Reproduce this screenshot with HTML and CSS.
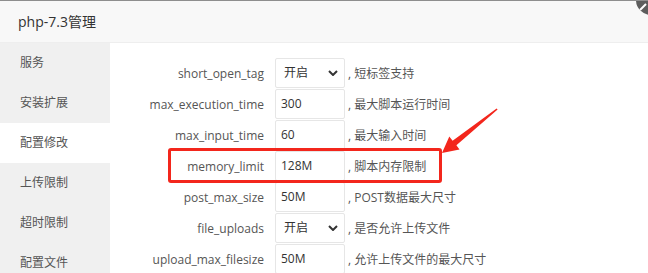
FILE: index.html
```html
<!DOCTYPE html>
<html lang="zh">
<head>
<meta charset="utf-8">
<title>php-7.3管理</title>
<link rel="stylesheet" href="styles.css">
</head>
<body>
<div class="dialog">
  <div class="title">php-7.3管理</div>
  <div class="main">
    <ul class="side">
      <li>服务</li>
      <li>安装扩展</li>
      <li class="active">配置修改</li>
      <li>上传限制</li>
      <li>超时限制</li>
      <li>配置文件</li>
    </ul>
    <div class="content">
      <div class="row">
        <span class="label">short_open_tag</span>
        <div class="sel"><span>开启</span><svg class="chev" viewBox="0 0 10 6" width="10" height="6"><path d="M1 1 L5 5 L9 1" fill="none" stroke="#333" stroke-width="2"/></svg></div>
        <span class="hint">, 短标签支持</span>
      </div>
      <div class="row">
        <span class="label">max_execution_time</span>
        <div class="inp">300</div>
        <span class="hint">, 最大脚本运行时间</span>
      </div>
      <div class="row">
        <span class="label">max_input_time</span>
        <div class="inp">60</div>
        <span class="hint">, 最大输入时间</span>
      </div>
      <div class="row">
        <span class="label">memory_limit</span>
        <div class="inp">128M</div>
        <span class="hint">, 脚本内存限制</span>
      </div>
      <div class="row">
        <span class="label">post_max_size</span>
        <div class="inp">50M</div>
        <span class="hint">, POST数据最大尺寸</span>
      </div>
      <div class="row">
        <span class="label">file_uploads</span>
        <div class="sel"><span>开启</span><svg class="chev" viewBox="0 0 10 6" width="10" height="6"><path d="M1 1 L5 5 L9 1" fill="none" stroke="#333" stroke-width="2"/></svg></div>
        <span class="hint">, 是否允许上传文件</span>
      </div>
      <div class="row">
        <span class="label">upload_max_filesize</span>
        <div class="inp">50M</div>
        <span class="hint">, 允许上传文件的最大尺寸</span>
      </div>
    </div>
  </div>
  <div class="mark"></div>
  <svg class="overlay" width="648" height="273" viewBox="0 0 648 273">
    <circle cx="651" cy="0" r="15" fill="#5d5d5d"/>
    <path d="M640 10 L646 4" stroke="#fff" stroke-width="2"/>
    <polygon points="497.6,109.6 456.4,145.3 459.5,149.5 442,153 449.3,136.6 452.6,140.7 496.6,108.4" fill="#f3261c"/>
  </svg>
</div>
</body>
</html>
```
FILE: styles.css
```css
* { box-sizing: border-box; }
html, body { margin: 0; padding: 0; background: #fff; }
body {
  font-family: "Open Sans", "Noto Sans CJK SC", sans-serif;
  font-size: 12px;
  color: #555;
  width: 648px;
  height: 273px;
  overflow: hidden;
}
.dialog {
  position: relative;
  width: 648px;
  height: 273px;
  border-top: 1px solid #8e8e8e;
  overflow: hidden;
}
.title {
  height: 42px;
  line-height: 42px;
  padding-left: 18px;
  font-size: 14px;
  color: #333;
  background: #f8f8f8;
  border-bottom: 1px solid #eee;
}
.main {
  display: flex;
  height: 240px;
}
.side {
  list-style: none;
  margin: 0;
  padding: 0;
  width: 110px;
  background: #f0f0f0;
  flex: none;
}
.side li {
  height: 40px;
  line-height: 40px;
  padding-left: 20px;
  color: #555;
}
.side li.active { background: #fff; }
.content {
  flex: 1;
  padding-top: 15px;
  display: flex;
  flex-direction: column;
  gap: 1px;
}
.row {
  display: flex;
  align-items: center;
  height: 30px;
}
.label {
  width: 154px;
  text-align: right;
  margin-right: 11px;
  color: #555;
}
.inp, .sel {
  width: 70px;
  height: 30px;
  border: 1px solid #e6e6e6;
  border-radius: 2px;
  line-height: 28px;
  padding-left: 5px;
  color: #333;
  background: #fff;
}
.sel {
  position: relative;
  padding-left: 8px;
}
.chev {
  position: absolute;
  right: 6px;
  top: 11px;
}
.hint {
  margin-left: 3px;
  color: #555;
}
.mark {
  position: absolute;
  left: 168px;
  top: 147px;
  width: 274px;
  height: 35px;
  border: 3px solid #f3261c;
  border-radius: 3px;
}
.overlay {
  position: absolute;
  left: 0;
  top: -1px;
  pointer-events: none;
}
```
